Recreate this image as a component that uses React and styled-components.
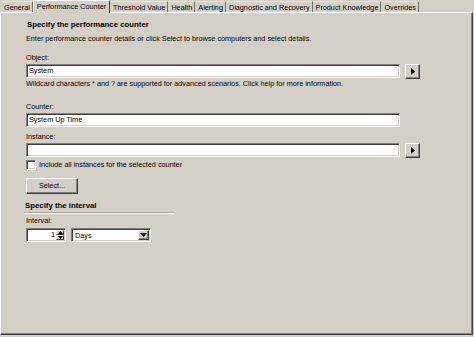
import React from "react";
import styled, { createGlobalStyle } from "styled-components";

const GlobalStyle = createGlobalStyle`
  html, body {
    margin: 0;
    padding: 0;
    background: #d4d0c8;
  }
  body {
    font-family: "Liberation Sans", Tahoma, Arial, sans-serif;
    font-size: 7.25px;
    color: #000;
  }
`;

const Window = styled.div`
  width: 474px;
  height: 337px;
  overflow: hidden;
  background: #d4d0c8;
`;

const TabStrip = styled.div`
  display: flex;
  align-items: flex-end;
  height: 12px;
  padding-left: 1px;
  position: relative;
  z-index: 1;
`;

const Tab = styled.div`
  height: ${(p) => (p.$active ? "13px" : "11px")};
  line-height: 11px;
  padding: 0 ${(p) => (p.$active ? "3px" : "2px")};
  margin-bottom: ${(p) => (p.$active ? "-1px" : "0")};
  white-space: nowrap;
  box-sizing: border-box;
  background: #d4d0c8;
  border-top: 1px solid ${(p) => (p.$active ? "#ffffff" : "#e8e6e2")};
  border-left: 1px solid ${(p) => (p.$active ? "#ffffff" : "transparent")};
  border-right: 1px solid ${(p) => (p.$active ? "#404040" : "#707070")};
`;

const Panel = styled.div`
  height: 323px;
  box-sizing: border-box;
  border-top: 1px solid #ffffff;
  border-left: 1px solid #ffffff;
  border-right: 1px solid #404040;
  border-bottom: 1px solid #404040;
  box-shadow: inset -1px -1px 0 #808080;
  width: 473px;
  padding: 7px 0 0 25px;
`;

const Heading = styled.div`
  font-weight: bold;
  font-size: 7.8px;
  line-height: 10px;
  height: 10px;
  margin-top: ${(p) => p.$mt || 0}px;
  margin-left: ${(p) => p.$ml || 0}px;
`;

const Text = styled.div`
  line-height: 10px;
  height: 10px;
  white-space: nowrap;
  margin-top: ${(p) => p.$mt || 0}px;
`;

const Separator = styled.div`
  width: 151px;
  height: 0;
  margin-left: -2px;
  border-top: 1px solid #a8a49c;
  border-bottom: 1px solid #ffffff;
  margin-top: ${(p) => p.$mt || 0}px;
`;

const FieldRow = styled.div`
  display: flex;
  align-items: center;
  gap: 5px;
  height: ${(p) => p.$h || 16}px;
  margin-top: ${(p) => p.$mt || 0}px;
`;

const Sunken = styled.div`
  box-sizing: border-box;
  background: #ffffff;
  border-style: solid;
  border-width: 1px;
  border-color: #808080 #ffffff #ffffff #808080;
  box-shadow: inset 1px 1px 0 #404040, inset -1px -1px 0 #d4d0c8;
`;

const Field = styled(Sunken)`
  width: ${(p) => p.$w || 374}px;
  height: 14px;
  line-height: 12px;
  padding-left: 2px;
  white-space: nowrap;
`;

const Raised = styled.div`
  box-sizing: border-box;
  background: #d4d0c8;
  border-style: solid;
  border-width: 1px;
  border-color: #ffffff #404040 #404040 #ffffff;
  box-shadow: inset -1px -1px 0 #808080;
`;

const ArrowButton = styled(Raised)`
  width: 15px;
  height: 15px;
  display: flex;
  align-items: center;
  justify-content: center;
`;

const Checkbox = styled(Sunken)`
  width: 10px;
  height: 10px;
`;

const CheckRow = styled.div`
  display: flex;
  align-items: center;
  gap: 3px;
  height: 10px;
  line-height: 10px;
  margin-top: ${(p) => p.$mt || 0}px;
`;

const Button = styled(Raised)`
  width: 52px;
  height: 16px;
  line-height: 14px;
  text-align: center;
  margin-top: ${(p) => p.$mt || 0}px;
`;

const SpinField = styled(Sunken)`
  width: 40px;
  height: 14px;
  display: flex;
  align-items: stretch;
`;

const SpinValue = styled.div`
  flex: 1;
  text-align: right;
  line-height: 12px;
  padding-right: 1px;
`;

const SpinButtons = styled.div`
  width: 9px;
  display: flex;
  flex-direction: column;
  padding: 1px 1px 1px 0;
  box-sizing: border-box;
`;

const SpinButton = styled(Raised)`
  flex: 1;
  display: flex;
  align-items: center;
  justify-content: center;
  box-shadow: none;
`;

const Combo = styled(Sunken)`
  width: 80px;
  height: 14px;
  display: flex;
  align-items: stretch;
  padding: 1px;
`;

const ComboValue = styled.div`
  flex: 1;
  line-height: 11px;
  padding-left: 2px;
`;

const ComboButton = styled(Raised)`
  width: 11px;
  display: flex;
  align-items: center;
  justify-content: center;
`;

const RightArrow = () => (
  <svg width="4" height="7" viewBox="0 0 4 7">
    <polygon points="0,0 4,3.5 0,7" fill="#000" />
  </svg>
);

const DownArrow = ({ w = 7, h = 4 }) => (
  <svg width={w} height={h} viewBox="0 0 7 4">
    <polygon points="0,0 7,0 3.5,4" fill="#000" />
  </svg>
);

const UpArrow = () => (
  <svg width="5" height="3" viewBox="0 0 5 3">
    <polygon points="0,3 5,3 2.5,0" fill="#000" />
  </svg>
);

const tabs = [
  "General",
  "Performance Counter",
  "Threshold Value",
  "Health",
  "Alerting",
  "Diagnostic and Recovery",
  "Product Knowledge",
  "Overrides",
];

export default function App() {
  return (
    <Window>
      <GlobalStyle />
      <TabStrip>
        {tabs.map((t) => (
          <Tab key={t} $active={t === "Performance Counter"}>
            {t}
          </Tab>
        ))}
      </TabStrip>
      <Panel>
        <Heading $ml={1}>Specify the performance counter</Heading>
        <Text $mt={4}>
          Enter performance counter details or click Select to browse computers and select details.
        </Text>
        <Text $mt={9}>Object:</Text>
        <FieldRow>
          <Field>System</Field>
          <ArrowButton>
            <RightArrow />
          </ArrowButton>
        </FieldRow>
        <Text>
          Wildcard characters * and ? are supported for advanced scenarios. Click help for more information.
        </Text>
        <Text $mt={13}>Counter:</Text>
        <FieldRow $h={14} $mt={1}>
          <Field>System Up Time</Field>
        </FieldRow>
        <Text $mt={5}>Instance:</Text>
        <FieldRow>
          <Field />
          <ArrowButton>
            <RightArrow />
          </ArrowButton>
        </FieldRow>
        <CheckRow $mt={2}>
          <Checkbox />
          <span>Include all instances for the selected counter</span>
        </CheckRow>
        <Button $mt={8}>Select...</Button>
        <Heading $mt={7} $ml={-1}>Specify the interval</Heading>
        <Separator $mt={1} />
        <Text $mt={2}>Interval:</Text>
        <FieldRow $h={14} $mt={2}>
          <SpinField>
            <SpinValue>1</SpinValue>
            <SpinButtons>
              <SpinButton>
                <UpArrow />
              </SpinButton>
              <SpinButton>
                <DownArrow w={5} h={3} />
              </SpinButton>
            </SpinButtons>
          </SpinField>
          <Combo>
            <ComboValue>Days</ComboValue>
            <ComboButton>
              <DownArrow />
            </ComboButton>
          </Combo>
        </FieldRow>
      </Panel>
    </Window>
  );
}
